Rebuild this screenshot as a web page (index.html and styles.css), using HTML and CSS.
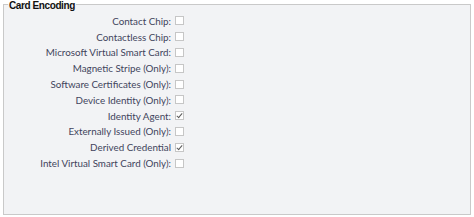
FILE: index.html
```html
<!DOCTYPE html>
<html lang="en">
<head>
  <meta charset="UTF-8">
  <title>Card Encoding</title>
  <link rel="stylesheet" href="styles.css">
</head>
<body>
  <fieldset class="encoding">
    <legend>Card Encoding</legend>
    <div class="rows">
      <label class="lbl">Contact Chip:</label><span class="box"></span>
      <label class="lbl">Contactless Chip:</label><span class="box"></span>
      <label class="lbl">Microsoft Virtual Smart Card:</label><span class="box"></span>
      <label class="lbl">Magnetic Stripe (Only):</label><span class="box"></span>
      <label class="lbl">Software Certificates (Only):</label><span class="box"></span>
      <label class="lbl">Device Identity (Only):</label><span class="box"></span>
      <label class="lbl">Identity Agent:</label><span class="box checked"></span>
      <label class="lbl">Externally Issued (Only):</label><span class="box"></span>
      <label class="lbl">Derived Credential</label><span class="box checked"></span>
      <label class="lbl">Intel Virtual Smart Card (Only):</label><span class="box"></span>
    </div>
  </fieldset>
</body>
</html>
```

FILE: styles.css
```css
html, body {
  margin: 0;
  padding: 0;
  background: #fff;
  font-family: Lato, "Open Sans", sans-serif;
}

/* the grey framed panel */
.encoding {
  box-sizing: border-box;
  height: 215px;
  margin: 0 3px;
  padding: 5px 0 0 0;
  border: 1px solid #c9c9c9;
  background: #f2f3f5;
}

/* legend sits on the top border line */
.encoding legend {
  position: relative;
  top: 2px;
  padding: 0 1px;
  margin-left: 4px;
  font-family: "Liberation Sans", Arial, sans-serif;
  font-size: 10px;
  letter-spacing: -0.4px;
  font-weight: bold;
  color: #111;
  line-height: 8px;
}

/* label column + checkbox column */
.rows {
  display: grid;
  grid-template-columns: 167px 9px;
  grid-auto-rows: 15.8px;
  column-gap: 4px;
  align-items: center;
}

.lbl {
  text-align: right;
  font-size: 9.8px;
  color: #41445c;
  white-space: nowrap;
}

.box {
  box-sizing: border-box;
  width: 9px;
  height: 9px;
  border: 1px solid #c6c6c6;
  background: #fff;
  position: relative;
}

.box.checked::after {
  content: "";
  position: absolute;
  left: 2px;
  top: 0;
  width: 2px;
  height: 5px;
  border: solid #5a5a5a;
  border-width: 0 1px 1px 0;
  transform: rotate(40deg);
}
```
